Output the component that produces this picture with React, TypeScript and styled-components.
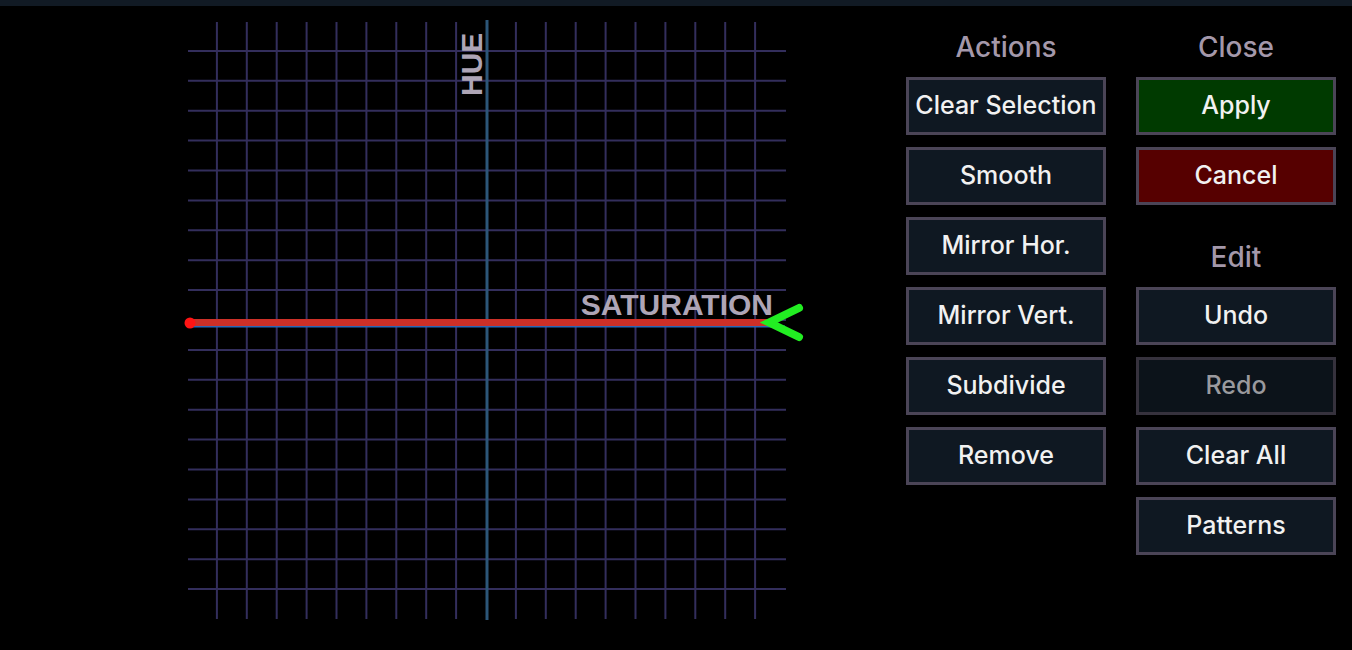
import styled, { createGlobalStyle } from 'styled-components';

const GlobalStyle = createGlobalStyle`
  html, body {
    margin: 0;
    padding: 0;
    background: #000;
  }
`;

const STEP = 29.9;
const SIZE = 600;
const gridIndexes = Array.from({ length: 19 }, (_, i) => i + 1);

type Tone = 'default' | 'apply' | 'cancel' | 'disabled';

const actionButtons = ['Clear Selection', 'Smooth', 'Mirror Hor.', 'Mirror Vert.', 'Subdivide', 'Remove'];

export default function App() {
  return (
    <>
      <GlobalStyle />
      <Page>
        <TopBar />
        <Main>
          <CanvasArea>
            <CurveSvg width={SIZE} height={SIZE} viewBox={`0 0 ${SIZE} ${SIZE}`}>
              {gridIndexes.map((i) =>
                i === 10 ? null : (
                  <line key={`v${i}`} x1={i * STEP} x2={i * STEP} y1={1} y2={598} stroke="#332e5c" strokeWidth={2} />
                ),
              )}
              {gridIndexes.map((i) => (
                <line key={`h${i}`} x1={1} x2={599} y1={i * STEP} y2={i * STEP} stroke="#332e5c" strokeWidth={2} />
              ))}
              <line x1={300} x2={300} y1={-1} y2={599} stroke="#2c5678" strokeWidth={3} />

              <text
                x={0}
                y={0}
                transform="translate(295 75) rotate(-90)"
                fontFamily="'Liberation Sans', Arial, sans-serif"
                fontWeight={700}
                fontSize={30}
                fill="#aea5b6"
              >
                HUE
              </text>
              <text
                x={586}
                y={294}
                textAnchor="end"
                fontFamily="'Liberation Sans', Arial, sans-serif"
                fontWeight={700}
                fontSize={30}
                fill="#aea5b6"
              >
                SATURATION
              </text>

              <line x1={1} x2={598} y1={305.5} y2={305.5} stroke="#2a68b8" strokeWidth={2} />
              <line x1={3} x2={584} y1={301.5} y2={301.5} stroke="#cc3028" strokeWidth={7} />
              <circle cx={3} cy={302} r={5.5} fill="#ff1414" />
              <polyline
                points="612,287 582,301.5 612,316"
                fill="none"
                stroke="#22ee22"
                strokeWidth={8}
                strokeLinecap="round"
                strokeLinejoin="miter"
              />
            </CurveSvg>
          </CanvasArea>

          <Panel>
            <Column>
              <Heading>Actions</Heading>
              {actionButtons.map((label) => (
                <PanelButton key={label}>{label}</PanelButton>
              ))}
            </Column>
            <Column>
              <Heading>Close</Heading>
              <PanelButton $tone="apply">Apply</PanelButton>
              <PanelButton $tone="cancel">Cancel</PanelButton>
              <Heading>Edit</Heading>
              <PanelButton>Undo</PanelButton>
              <PanelButton $tone="disabled">Redo</PanelButton>
              <PanelButton>Clear All</PanelButton>
              <PanelButton>Patterns</PanelButton>
            </Column>
          </Panel>
        </Main>
      </Page>
    </>
  );
}

const Page = styled.div`
  width: 1352px;
  height: 650px;
  background: #000;
  overflow: hidden;
`;

const TopBar = styled.div`
  height: 6px;
  background: #111a24;
`;

const Main = styled.div`
  display: flex;
  align-items: flex-start;
  padding-left: 187px;
`;

const CanvasArea = styled.div`
  margin-top: 15px;
  width: ${SIZE}px;
  height: ${SIZE}px;
`;

const CurveSvg = styled.svg`
  display: block;
  overflow: visible;
`;

const Panel = styled.div`
  display: flex;
  gap: 30px;
  margin-left: 119px;
  padding-top: 1px;
`;

const Column = styled.div`
  display: flex;
  flex-direction: column;
  gap: 12px;
  width: 200px;
`;

const Heading = styled.div`
  height: 58px;
  display: flex;
  align-items: flex-end;
  justify-content: center;
  padding-bottom: 1px;
  box-sizing: border-box;
  font-family: Inter, 'Liberation Sans', sans-serif;
  font-weight: 500;
  font-size: 28px;
  color: #a498aa;
`;

const toneBg: Record<Tone, string> = {
  default: '#0f1822',
  apply: '#003a00',
  cancel: '#560000',
  disabled: '#0c131a',
};

const PanelButton = styled.button<{ $tone?: Tone }>`
  height: 58px;
  width: 200px;
  box-sizing: border-box;
  border: 3px solid ${({ $tone }) => ($tone === 'disabled' ? '#36323d' : '#4b4557')};
  background: ${({ $tone = 'default' }) => toneBg[$tone]};
  color: ${({ $tone }) => ($tone === 'disabled' ? '#9a9a9e' : '#f1f1f1')};
  font-family: Inter, 'Liberation Sans', sans-serif;
  font-weight: 500;
  font-size: 25px;
  padding: 0 0 3px;
  cursor: pointer;
`;
